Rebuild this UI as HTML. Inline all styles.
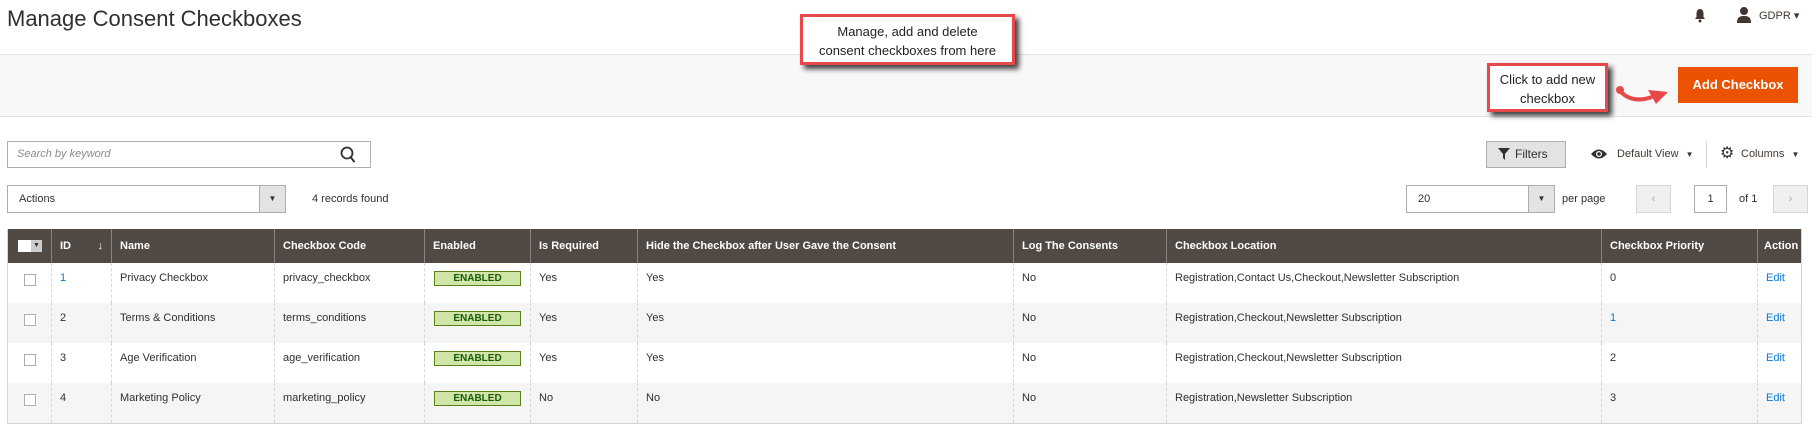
<!DOCTYPE html>
<html><head><meta charset="utf-8">
<style>
*{box-sizing:border-box;margin:0;padding:0}
body{width:1812px;height:427px;background:#fff;font-family:"Liberation Sans",sans-serif;font-size:11px;color:#303030;position:relative;overflow:hidden}
.a{position:absolute}
.callout{position:absolute;background:#fff;border:3px solid #e8484a;box-shadow:4px 4px 5px rgba(0,0,0,.75);text-align:center;font-size:13px;color:#222;line-height:19px}
table{position:absolute;left:7px;top:229px;width:1794px;border-collapse:collapse;table-layout:fixed}
th{background:#514943;color:#fff;font-weight:bold;text-align:left;height:34px;padding:0 8px;border-left:1px solid #8a837f;font-size:11px}
th:first-child{border-left:none}
td{height:40px;padding:0 8px;border-left:1px dashed #d6d6d6;vertical-align:top;padding-top:9px;color:#303030}
td:first-child{border-left:none}
tr.alt td{background:#f5f5f5}
tbody tr:last-child td{border-bottom:1px solid #d6d6d6}
table{border-left:1px solid #d6d6d6;border-right:1px solid #d6d6d6}
.badge{display:block;width:87px;height:15px;background:#d0e5a9;border:1px solid #5b8116;color:#185b00;font-weight:bold;text-align:center;line-height:13px;font-size:10px;margin-left:1px;margin-top:-1px}
.cb{display:block;width:12px;height:12px;border:1px solid #adadad;background:#fff;margin:2px 0 0 8px}
.blue{color:#007bdb}
.sel{position:absolute;border:1px solid #adadad;background:#fff;height:28px;line-height:26px;padding-left:11px;color:#303030}
.sel .btn{position:absolute;right:0;top:0;width:26px;height:26px;background:#e3e3e3;border-left:1px solid #adadad;text-align:center;font-size:8px}
</style></head><body>
<div class="a" style="left:7px;top:6px;font-size:22px;color:#303030">Manage Consent Checkboxes</div>

<div class="a" style="left:0;top:54px;width:1812px;height:63px;background:#f8f8f8;border-top:1px solid #e3e3e3;border-bottom:1px solid #e3e3e3"></div>

<div class="callout" style="left:800px;top:14px;width:215px;height:51px;padding-top:5px">Manage, add and delete<br>consent checkboxes from here</div>
<div class="callout" style="left:1487px;top:63px;width:121px;height:49px;padding-top:4px">Click to add new<br>checkbox</div>
<svg class="a" style="left:1614px;top:84px" width="62" height="24" viewBox="0 0 62 24"><circle cx="6" cy="6" r="4" fill="#e8484a"/><path d="M6 7 Q18 20 38 13" stroke="#e8484a" stroke-width="4" fill="none"/><path d="M34 6 L54 8 L42 20 Z" fill="#e8484a"/></svg>
<div class="a" style="left:1678px;top:67px;width:120px;height:36px;background:#eb5202;color:#fff;font-weight:bold;font-size:13px;text-align:center;line-height:36px">Add Checkbox</div>

<svg class="a" style="left:1694px;top:8px" width="12" height="15" viewBox="0 0 12 15"><path d="M6 1C3 1 2.5 4 2.5 6v3L1 11h10L9.5 9V6C9.5 4 9 1 6 1z" fill="#41362f"/><circle cx="6" cy="13" r="1.5" fill="#41362f"/></svg>
<svg class="a" style="left:1736px;top:6px" width="16" height="17" viewBox="0 0 16 17"><circle cx="8" cy="5" r="4" fill="#41362f"/><path d="M1 17C1 11 4 10 8 10s7 1 7 7z" fill="#41362f"/></svg>
<div class="a" style="left:1759px;top:9px;font-size:11px;color:#41362f">GDPR ▾</div>

<div class="a" style="left:7px;top:141px;width:364px;height:27px;border:1px solid #adadad;padding-left:9px;line-height:25px;font-style:italic;color:#8a8a8a;font-size:11px">Search by keyword</div>
<svg class="a" style="left:340px;top:146px" width="16" height="17" viewBox="0 0 16 17"><circle cx="7" cy="7" r="5.5" stroke="#303030" stroke-width="1.8" fill="none"/><path d="M10.5 11 L14.5 16" stroke="#303030" stroke-width="2"/></svg>

<div class="a" style="left:1486px;top:141px;width:80px;height:27px;background:#e3e3e3;border:1px solid #adadad;line-height:25px;padding-left:28px;color:#303030;font-size:12px">Filters</div>
<svg class="a" style="left:1498px;top:148px" width="12" height="12" viewBox="0 0 12 12"><path d="M0 0H12L7 6V12L5 10V6Z" fill="#303030"/></svg>
<svg class="a" style="left:1590px;top:148px" width="18" height="12" viewBox="0 0 18 12"><path d="M1 6Q9 -3 17 6Q9 15 1 6Z" fill="#303030"/><circle cx="9" cy="6" r="3" fill="#fff"/><circle cx="9" cy="6" r="1.8" fill="#303030"/></svg>
<div class="a" style="left:1617px;top:148px;font-size:11px;color:#41362f">Default View <span style="font-size:8px;margin-left:4px">▼</span></div>
<div class="a" style="left:1706px;top:141px;width:1px;height:27px;background:#d6d6d6"></div>
<div class="a" style="left:1720px;top:143px;font-size:16px;color:#303030">⚙</div>
<div class="a" style="left:1741px;top:148px;font-size:11px;color:#41362f">Columns <span style="font-size:8px;margin-left:4px">▼</span></div>

<div class="sel" style="left:7px;top:185px;width:279px">Actions<div class="btn">▼</div></div>
<div class="a" style="left:312px;top:193px;color:#303030">4 records found</div>

<div class="sel" style="left:1406px;top:185px;width:149px">20<div class="btn">▼</div></div>
<div class="a" style="left:1562px;top:193px">per page</div>
<div class="a" style="left:1636px;top:185px;width:35px;height:28px;background:#f0f0f0;border:1px solid #d6d6d6;text-align:center;line-height:26px;color:#aaa">‹</div>
<div class="a" style="left:1694px;top:185px;width:33px;height:28px;border:1px solid #adadad;text-align:center;line-height:26px">1</div>
<div class="a" style="left:1739px;top:193px">of 1</div>
<div class="a" style="left:1773px;top:185px;width:35px;height:28px;background:#f0f0f0;border:1px solid #d6d6d6;text-align:center;line-height:26px;color:#aaa">›</div>

<table>
<colgroup><col style="width:44px"><col style="width:60px"><col style="width:163px"><col style="width:150px"><col style="width:106px"><col style="width:107px"><col style="width:376px"><col style="width:153px"><col style="width:435px"><col style="width:156px"><col style="width:44px"></colgroup>
<thead><tr>
<th style="padding:0 0 0 10px"><span style="display:inline-block;width:13px;height:12px;background:#fff;vertical-align:middle"></span><span style="display:inline-block;width:11px;height:12px;background:#ccc;color:#303030;font-size:7px;text-align:center;line-height:12px;vertical-align:middle">▼</span></th>
<th>ID <span style="float:right">↓</span></th><th>Name</th><th>Checkbox Code</th><th>Enabled</th><th>Is Required</th><th>Hide the Checkbox after User Gave the Consent</th><th>Log The Consents</th><th>Checkbox Location</th><th>Checkbox Priority</th><th style="padding:0 6px">Action</th>
</tr></thead>
<tbody>
<tr><td><span class="cb"></span></td><td class="blue">1</td><td>Privacy Checkbox</td><td>privacy_checkbox</td><td><span class="badge">ENABLED</span></td><td>Yes</td><td>Yes</td><td>No</td><td>Registration,Contact Us,Checkout,Newsletter Subscription</td><td>0</td><td class="blue">Edit</td></tr>
<tr class="alt"><td><span class="cb"></span></td><td>2</td><td>Terms &amp; Conditions</td><td>terms_conditions</td><td><span class="badge">ENABLED</span></td><td>Yes</td><td>Yes</td><td>No</td><td>Registration,Checkout,Newsletter Subscription</td><td class="blue">1</td><td class="blue">Edit</td></tr>
<tr><td><span class="cb"></span></td><td>3</td><td>Age Verification</td><td>age_verification</td><td><span class="badge">ENABLED</span></td><td>Yes</td><td>Yes</td><td>No</td><td>Registration,Checkout,Newsletter Subscription</td><td>2</td><td class="blue">Edit</td></tr>
<tr class="alt"><td><span class="cb"></span></td><td>4</td><td>Marketing Policy</td><td>marketing_policy</td><td><span class="badge">ENABLED</span></td><td>No</td><td>No</td><td>No</td><td>Registration,Newsletter Subscription</td><td>3</td><td class="blue">Edit</td></tr>
</tbody></table>
</body></html>
